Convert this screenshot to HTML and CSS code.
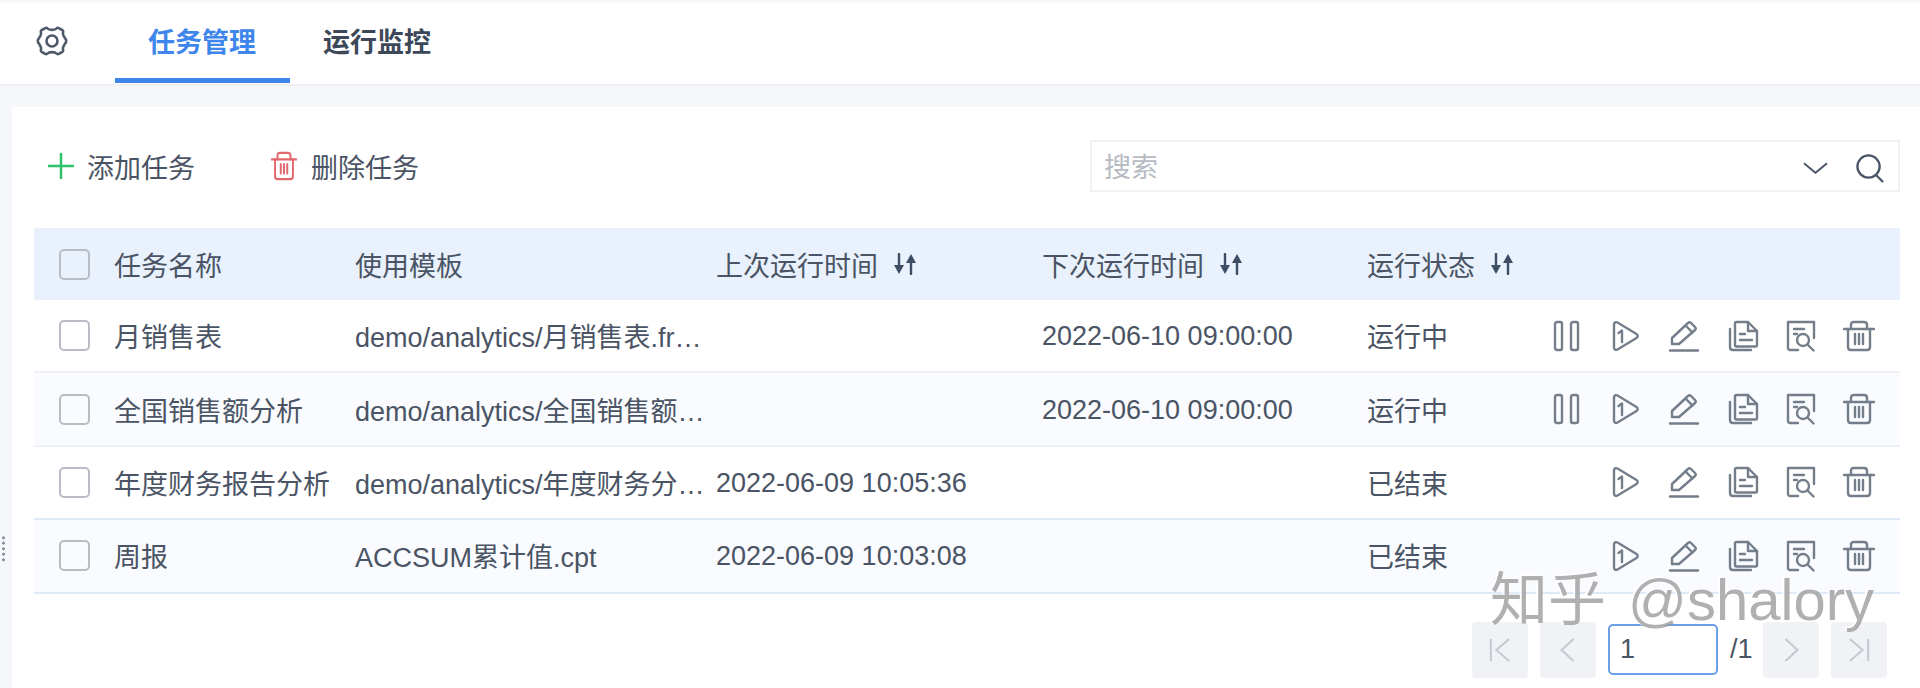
FILE: index.html
```html
<!DOCTYPE html>
<html>
<head>
  <meta charset="utf-8">
  <title>任务管理</title>
  <link rel="stylesheet" href="styles.css">
</head>
<body>
  <svg class="defs" width="0" height="0">
    <symbol id="i-pause" viewBox="0 0 32 32">
      <rect x="3" y="2" width="7" height="28" rx="2"/>
      <rect x="19" y="2" width="7" height="28" rx="2"/>
    </symbol>
    <symbol id="i-run" viewBox="0 0 32 32">
      <path d="M4 4.500c0-2 1.800-3 3.500-2l19 11.500c1.600 1 1.600 3 0 4L7.500 29.500c-1.700 1-3.500 0-3.500-2z"/>
      <path d="M8.500 13l3.500-2.500v11.500"/>
    </symbol>
    <symbol id="i-edit" viewBox="0 0 32 32">
      <path d="M4 24v-6L20 3c1-1 2-1 3 0l4 4c1 1 1 2 0 3L11 24z"/>
      <path d="M17.500 5.500l7 7"/>
      <path d="M2 30.500h28"/>
    </symbol>
    <symbol id="i-copy" viewBox="0 0 32 32">
      <path d="M8 3.500c0-1 .8-1.500 1.500-1.500H21l9 9v14c0 1-.7 1.500-1.500 1.500h-19c-1 0-1.500-.7-1.500-1.500z"/>
      <path d="M21 2v9h9"/>
      <path d="M13 14h5M13 20h12"/>
      <path d="M3 9v18c0 2 1 3 3 3h18"/>
    </symbol>
    <symbol id="i-log" viewBox="0 0 32 32">
      <path d="M13 30H5c-1 0-2-.8-2-2V2h26v16"/>
      <path d="M9 9h10M9 14h3"/>
      <circle cx="18" cy="20" r="6"/>
      <path d="M22.500 24.500l6 6"/>
    </symbol>
    <symbol id="i-trash" viewBox="0 0 32 32" preserveAspectRatio="none">
      <path d="M1 9h30"/>
      <path d="M8 9V5c0-2 1-3 3-3h10c2 0 3 1 3 3v4"/>
      <path d="M5 9v18c0 2 1 3 3 3h16c2 0 3-1 3-3V9"/>
      <path d="M12 14v10M20 14v10M16 14v10"/>
    </symbol>
    <symbol id="i-sort" viewBox="0 0 26 22">
      <path d="M7 1v14"/>
      <path class="fill" d="M2 12h10l-5 9z"/>
      <path d="M19 7v14"/>
      <path class="fill" d="M14 10h10l-5-9z"/>
    </symbol>
  </svg>

  <div class="handle"></div>

  <header class="topbar">
    <svg class="gear" viewBox="0 0 32 32">
      <path d="M11.500 3.500c1.500 1.800 7.500 1.800 9 0 .6-.7 1.500-.8 2.300-.4l3.600 2.100c.8.500 1 1.300.7 2.100-.8 2.200 0 3.500 2.600 6.900.6.700.6 2.900 0 3.600-2.600 3.400-3.400 4.700-2.600 6.900.3.800.1 1.600-.7 2.100l-3.600 2.100c-.8.400-1.700.3-2.300-.4-1.500-1.800-7.500-1.800-9 0-.6.700-1.500.8-2.300.4l-3.600-2.100c-.8-.5-1-1.300-.7-2.100.8-2.200 0-3.500-2.600-6.900-.6-.7-.6-2.900 0-3.600 2.600-3.400 3.400-4.700 2.600-6.900-.3-.8-.1-1.600.7-2.100l3.600-2.100c.8-.4 1.700-.3 2.300.4z"/>
      <circle cx="16" cy="16" r="5.500"/>
    </svg>
    <nav class="tabs">
      <a class="tab active">任务管理</a>
      <a class="tab">运行监控</a>
    </nav>
  </header>

  <main class="panel">
    <div class="toolbar">
      <a class="tool">
        <svg class="tool-icon add" viewBox="0 0 26 26"><path d="M13 0v26M0 13h26"/></svg>
        添加任务
      </a>
      <a class="tool">
        <svg class="tool-icon del"><use href="#i-trash"/></svg>
        删除任务
      </a>
      <div class="search">
        <input type="text" placeholder="搜索">
        <svg class="chevron" viewBox="0 0 26 12"><path d="M1 1l12 10L25 1"/></svg>
        <svg class="magnifier" viewBox="0 0 30 30"><circle cx="14" cy="13" r="11.500"/><path d="M22 22l7 7"/></svg>
      </div>
    </div>

    <div class="table">
      <div class="row head">
        <span class="check"></span>
        <span class="cell">任务名称</span>
        <span class="cell">使用模板</span>
        <span class="cell">上次运行时间<svg class="sort"><use href="#i-sort"/></svg></span>
        <span class="cell">下次运行时间<svg class="sort"><use href="#i-sort"/></svg></span>
        <span class="cell">运行状态<svg class="sort"><use href="#i-sort"/></svg></span>
        <span></span>
      </div>

      <div class="row">
        <span class="check"></span>
        <span class="cell">月销售表</span>
        <span class="cell">demo/analytics/月销售表.fr…</span>
        <span class="cell"></span>
        <span class="cell time">2022-06-10 09:00:00</span>
        <span class="cell">运行中</span>
        <span class="actions">
          <svg><use href="#i-pause"/></svg>
          <svg><use href="#i-run"/></svg>
          <svg><use href="#i-edit"/></svg>
          <svg><use href="#i-copy"/></svg>
          <svg><use href="#i-log"/></svg>
          <svg><use href="#i-trash"/></svg>
        </span>
      </div>

      <div class="row">
        <span class="check"></span>
        <span class="cell">全国销售额分析</span>
        <span class="cell">demo/analytics/全国销售额…</span>
        <span class="cell"></span>
        <span class="cell time">2022-06-10 09:00:00</span>
        <span class="cell">运行中</span>
        <span class="actions">
          <svg><use href="#i-pause"/></svg>
          <svg><use href="#i-run"/></svg>
          <svg><use href="#i-edit"/></svg>
          <svg><use href="#i-copy"/></svg>
          <svg><use href="#i-log"/></svg>
          <svg><use href="#i-trash"/></svg>
        </span>
      </div>

      <div class="row">
        <span class="check"></span>
        <span class="cell">年度财务报告分析</span>
        <span class="cell">demo/analytics/年度财务分…</span>
        <span class="cell time">2022-06-09 10:05:36</span>
        <span class="cell"></span>
        <span class="cell">已结束</span>
        <span class="actions">
          <svg><use href="#i-run"/></svg>
          <svg><use href="#i-edit"/></svg>
          <svg><use href="#i-copy"/></svg>
          <svg><use href="#i-log"/></svg>
          <svg><use href="#i-trash"/></svg>
        </span>
      </div>

      <div class="row">
        <span class="check"></span>
        <span class="cell">周报</span>
        <span class="cell">ACCSUM累计值.cpt</span>
        <span class="cell time">2022-06-09 10:03:08</span>
        <span class="cell"></span>
        <span class="cell">已结束</span>
        <span class="actions">
          <svg><use href="#i-run"/></svg>
          <svg><use href="#i-edit"/></svg>
          <svg><use href="#i-copy"/></svg>
          <svg><use href="#i-log"/></svg>
          <svg><use href="#i-trash"/></svg>
        </span>
      </div>
    </div>

    <div class="pager">
      <a class="page-btn"><svg viewBox="0 0 24 28"><path d="M2 2v24M22 2L8 14l14 12"/></svg></a>
      <a class="page-btn"><svg viewBox="0 0 24 28"><path d="M18 2L5 14l13 12"/></svg></a>
      <input class="page-input" type="text" value="1">
      <span class="page-total">/1</span>
      <a class="page-btn"><svg viewBox="0 0 24 28"><path d="M6 2l13 12L6 26"/></svg></a>
      <a class="page-btn"><svg viewBox="0 0 24 28"><path d="M2 2l14 12L2 26M22 2v24"/></svg></a>
    </div>
  </main>

  <div class="watermark">知乎 @shalory</div>
</body>
</html>
```

FILE: styles.css
```css
* {
  box-sizing: border-box;
}

html, body {
  height: 100%;
}

body {
  margin: 0;
  background: #f5f7fa;
  color: #4a5464;
  font-family: "Liberation Sans", "Noto Sans CJK SC", sans-serif;
  font-size: 27px;
  overflow: hidden;
  position: relative;
}

.defs {
  position: absolute;
}

symbol {
  fill: none;
  stroke: currentColor;
  stroke-width: 2.4;
  stroke-linecap: round;
  stroke-linejoin: round;
}

.fill {
  fill: currentColor;
  stroke: none;
}

/* top bar */
.topbar {
  display: flex;
  height: 86px;
  padding: 3px 0 0 36px;
  background: #fff;
  border-bottom: 2px solid #eef0f4;
  box-shadow: inset 0 3px 0 #f8f8f9;
}

.gear {
  width: 32px;
  height: 32px;
  margin-top: 22px;
  fill: none;
  stroke: #4d5868;
  stroke-width: 2.600;
}

.tabs {
  display: flex;
  margin-left: 47px;
}

.tab {
  display: flex;
  align-items: center;
  height: 80px;
  padding: 0 34px 0 33px;
  font-weight: bold;
  color: #3c4858;
  border-bottom: 5px solid transparent;
}

.tab.active {
  color: #3f86ec;
  border-bottom-color: #3f86ec;
}

/* panel */
.panel {
  height: 581px;
  margin: 21px 0 0 12px;
  padding: 33px 20px 0 22px;
  background: #fff;
}

.toolbar {
  display: flex;
  align-items: center;
  height: 52px;
  margin-bottom: 36px;
  padding-left: 14px;
}

.tool {
  display: flex;
  align-items: center;
  gap: 13px;
  margin-right: 76px;
}

.tool-icon {
  width: 26px;
  height: 30px;
  fill: none;
}

.tool-icon.add {
  stroke: #2fc26b;
  stroke-width: 2.500;
}

.tool-icon.del {
  margin-right: 1px;
  color: #e2686e;
}

.search {
  display: flex;
  align-items: center;
  width: 810px;
  height: 52px;
  margin-left: auto;
  padding: 4px 14px 0 12px;
  border: 2px solid #eff1f4;
}

.search input {
  flex: 1;
  min-width: 0;
  border: 0;
  outline: 0;
  padding: 0;
  font: inherit;
  color: inherit;
}

.search input::placeholder {
  color: #b6bbc3;
}

.chevron {
  width: 25px;
  height: 12px;
  margin-right: 27px;
  fill: none;
  stroke: #4a5668;
  stroke-width: 2;
}

.magnifier {
  width: 29px;
  height: 29px;
  fill: none;
  stroke: #4a5668;
  stroke-width: 2.400;
}

/* table */
.row {
  display: grid;
  grid-template-columns: 80px 241px 361px 326px 325px 185px 1fr;
  align-items: center;
  height: 73.400px;
  border-bottom: 2px solid #eef1f6;
}

.row:nth-child(even) {
  background: #fff;
}

.row:nth-child(odd) {
  background: #f9fbfe;
}

.row:nth-child(n+4) {
  border-bottom-color: #deeaf8;
}

.row.head {
  height: 72px;
  background: #e8f1fc;
  border-bottom: 0;
}

.check {
  display: block;
  width: 31px;
  height: 31px;
  margin-left: 25px;
  background: transparent;
  border: 2px solid #b8bdc5;
  border-radius: 5px;
}

.cell {
  display: flex;
  align-items: center;
  white-space: nowrap;
}

.time {
  padding-top: 2px;
}

.sort {
  width: 26px;
  height: 22px;
  margin-left: 14px;
  color: #3d4d63;
}

.actions {
  display: grid;
  grid-template-columns: repeat(6, 32px);
  justify-content: end;
  column-gap: 26.200px;
  padding-right: 26px;
  color: #747e8b;
}

.actions svg {
  width: 32px;
  height: 32px;
}

/* rows without the pause button keep the other icons in their columns */
.actions svg:first-child:nth-last-child(5) {
  grid-column-start: 2;
}

/* pager */
.pager {
  display: flex;
  align-items: center;
  justify-content: flex-end;
  gap: 12px;
  margin-top: 28px;
  padding-right: 13px;
}

.page-btn {
  display: flex;
  align-items: center;
  justify-content: center;
  width: 56px;
  height: 56px;
  background: #f0f2f6;
  border-radius: 4px;
}

.page-btn svg {
  width: 22px;
  height: 26px;
  fill: none;
  stroke: #c4c9d1;
  stroke-width: 2.200;
}

.page-input {
  width: 110px;
  height: 51px;
  padding: 0 0 0 10px;
  border: 2px solid #6b9fe8;
  border-radius: 5px;
  outline: 0;
  font: inherit;
  color: inherit;
}

.page-total {
  width: 21px;
}

/* over everything else */
.handle {
  position: absolute;
  left: 2px;
  top: 535px;
  width: 3px;
  height: 27px;
  background: radial-gradient(circle, #7f8894 1.300px, transparent 1.500px) 0 0 / 3px 5.500px;
}

.watermark {
  position: absolute;
  left: 1490px;
  top: 553px;
  font-size: 58px;
  word-spacing: 6px;
  color: rgba(150, 150, 150, 0.75);
  text-shadow: -2px -1px 0 rgba(255, 255, 255, 0.9);
  white-space: nowrap;
  pointer-events: none;
}
```
